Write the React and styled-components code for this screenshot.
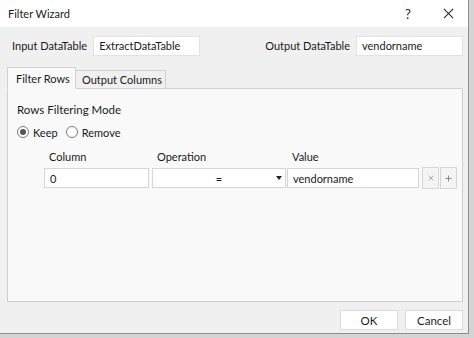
import React from 'react';
import styled, { createGlobalStyle } from 'styled-components';

const Global = createGlobalStyle`
  html, body {
    margin: 0;
    padding: 0;
    background: #d4d4d4;
    font-family: Lato, "Noto Sans", sans-serif;
    font-size: 11px;
    color: #1a1a1a;
  }
`;

const Window = styled.div`
  width: 469px;
  height: 334px;
  background: #f0f0f0;
  border-right: 1px solid #8f8f8f;
  border-bottom: 1px solid #8f8f8f;
  display: flex;
  flex-direction: column;
  box-sizing: border-box;
`;

const TitleBar = styled.div`
  height: 27px;
  background: #ffffff;
  display: flex;
  align-items: center;
  padding-left: 8px;
`;

const Title = styled.div`
  flex: 1;
`;

const TitleButton = styled.div`
  width: 40px;
  display: flex;
  justify-content: center;
  font-size: 13px;
  color: #222;
`;

const Body = styled.div`
  flex: 1;
  display: flex;
  flex-direction: column;
  padding: 8px 5px 0 7px;
`;

const HeaderRow = styled.div`
  display: flex;
  align-items: center;
  height: 21px;
  padding-left: 5px;
`;

const Label = styled.span`
  margin-right: 6px;
`;

const TextBox = styled.div`
  box-sizing: border-box;
  width: ${p => p.$w}px;
  height: ${p => p.$h || 20}px;
  background: #fff;
  border: 1px solid ${p => p.$border || '#e2e2e2'};
  padding-left: 5px;
  display: flex;
  align-items: center;
  white-space: nowrap;
`;

const Spacer = styled.div`
  flex: 1;
`;

const Tabs = styled.div`
  display: flex;
  align-items: flex-end;
  margin-top: 10px;
  height: 22px;
`;

const Tab = styled.div`
  box-sizing: border-box;
  width: ${p => p.$w}px;
  height: ${p => (p.$active ? 22 : 19)}px;
  padding-left: ${p => (p.$active ? 8 : 6)}px;
  display: flex;
  align-items: center;
  white-space: nowrap;
  border: 1px solid #d0d0d0;
  border-bottom: 1px solid ${p => (p.$active ? '#f9f9f9' : '#d0d0d0')};
  background: ${p => (p.$active ? '#f9f9f9' : '#f0f0f0')};
  margin-bottom: -1px;
  position: relative;
  z-index: ${p => (p.$active ? 2 : 1)};
  ${p => !p.$active && 'margin-left: -1px;'}
`;

const Panel = styled.div`
  box-sizing: border-box;
  width: 456px;
  height: 214px;
  background: #f9f9f9;
  border: 1px solid #cfcfcf;
  padding: 12px 0 0 9px;
`;

const GroupTitle = styled.div`
  height: 18px;
  line-height: 18px;
  font-size: 11.5px;
`;

const RadioRow = styled.div`
  display: flex;
  align-items: center;
  height: 22px;
  margin-top: 2px;
`;

const RadioItem = styled.div`
  display: flex;
  align-items: center;
  margin-right: 8px;
`;

const RadioDot = styled.span`
  box-sizing: border-box;
  width: 12px;
  height: 12px;
  border-radius: 50%;
  border: 1px solid #7a7a7a;
  background: #fff;
  margin-right: 4px;
  display: flex;
  align-items: center;
  justify-content: center;
  &::after {
    content: '';
    width: 6px;
    height: 6px;
    border-radius: 50%;
    background: ${p => (p.$checked ? '#555' : 'transparent')};
  }
`;

const Grid = styled.div`
  display: grid;
  grid-template-columns: 108px 135px 135px 18px 17px;
  margin-left: 27px;
  margin-top: 2px;
`;

const ColHead = styled.div`
  height: 23px;
  line-height: 23px;
  padding-left: 5px;
`;

const Select = styled(TextBox)`
  justify-content: center;
  position: relative;
  padding: 0;
`;

const Arrow = styled.span`
  position: absolute;
  right: 3px;
  top: 7px;
  width: 0;
  height: 0;
  border-left: 3.5px solid transparent;
  border-right: 3.5px solid transparent;
  border-top: 4px solid #222;
`;

const SmallButton = styled.div`
  box-sizing: border-box;
  width: 17px;
  height: 22px;
  margin-top: -1px;
  border: 1px solid #d6d6d6;
  background: #f4f4f4;
  display: flex;
  align-items: center;
  justify-content: center;
`;

const Footer = styled.div`
  display: flex;
  justify-content: flex-end;
  gap: 7px;
  padding-top: 8px;
`;

const Button = styled.div`
  box-sizing: border-box;
  width: 58px;
  height: 20px;
  background: #fff;
  border: 1px solid #dadada;
  display: flex;
  align-items: center;
  justify-content: center;
  font-size: 11.5px;
`;

const Cross = ({ size = 12, color = '#222', w = 1.1 }) => (
  <svg width={size} height={size} viewBox="0 0 12 12">
    <path d="M1 1L11 11M11 1L1 11" stroke={color} strokeWidth={w} fill="none" />
  </svg>
);

const Plus = () => (
  <svg width="7" height="7" viewBox="0 0 7 7">
    <path d="M3.5 0.5V6.5M0.5 3.5H6.5" stroke="#8a8a8a" strokeWidth="1" fill="none" />
  </svg>
);

export default function App() {
  return (
    <>
      <Global />
      <Window>
        <TitleBar>
          <Title>Filter Wizard</Title>
          <TitleButton>?</TitleButton>
          <TitleButton><Cross size={11} /></TitleButton>
        </TitleBar>
        <Body>
          <HeaderRow>
            <Label>Input DataTable</Label>
            <TextBox $w={107}>ExtractDataTable</TextBox>
            <Spacer />
            <Label>Output DataTable</Label>
            <TextBox $w={107}>vendorname</TextBox>
          </HeaderRow>
          <Tabs>
            <Tab $active $w={69}>Filter Rows</Tab>
            <Tab $w={91}>Output Columns</Tab>
          </Tabs>
          <Panel>
            <GroupTitle>Rows Filtering Mode</GroupTitle>
            <RadioRow>
              <RadioItem><RadioDot $checked />Keep</RadioItem>
              <RadioItem><RadioDot />Remove</RadioItem>
            </RadioRow>
            <Grid>
              <ColHead>Column</ColHead>
              <ColHead>Operation</ColHead>
              <ColHead>Value</ColHead>
              <div />
              <div />
              <TextBox $w={105} $border="#d6d6d6">0</TextBox>
              <Select $w={134} $border="#d6d6d6">=<Arrow /></Select>
              <TextBox $w={132} $border="#d6d6d6">vendorname</TextBox>
              <SmallButton><Cross size={6} color="#8a8a8a" w={1.4} /></SmallButton>
              <SmallButton><Plus /></SmallButton>
            </Grid>
          </Panel>
          <Footer>
            <Button>OK</Button>
            <Button>Cancel</Button>
          </Footer>
        </Body>
      </Window>
    </>
  );
}
